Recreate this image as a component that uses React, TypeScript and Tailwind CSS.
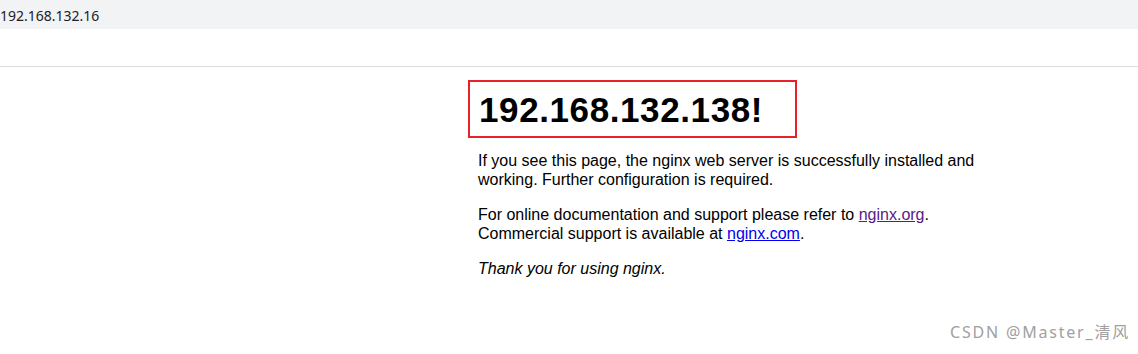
export default function App() {
  return (
    <div className="relative h-[354px] w-[1138px] overflow-hidden bg-white">
      <div className="flex h-[29px] items-center bg-[#f1f3f4] pt-[2px] font-['Noto_Sans',sans-serif] text-[14px] text-[#202124]">
        192.168.132.16
      </div>
      <div className="mt-[37px] h-px bg-[#dcdcdc]" />

      <div className="ml-[468px] mt-[13px] font-['Liberation_Sans',Arial,sans-serif] text-black">
        <div className="flex h-[58px] w-[329px] items-center border-2 border-[#e8202a] pl-[9px]">
          <h1 className="text-[35px] font-bold leading-none tracking-[0.6px]">192.168.132.138!</h1>
        </div>
        <div className="mt-[13px] pl-[10px] text-[16px] leading-[19px]">
          <p>
            If you see this page, the nginx web server is successfully installed and
            <br />
            working. Further configuration is required.
          </p>
          <p className="mt-[16px]">
            For online documentation and support please refer to{" "}
            <a href="#" className="text-[#551a8b] underline">nginx.org</a>.
            <br />
            Commercial support is available at{" "}
            <a href="#" className="text-[#0000ee] underline">nginx.com</a>.
          </p>
          <p className="mt-[16px] italic">Thank you for using nginx.</p>
        </div>
      </div>

      <div className="absolute bottom-[10px] right-[8px] font-['Noto_Sans','Noto_Sans_CJK_SC',sans-serif] text-[16px] tracking-[1.8px] text-[#a0a0a0]">
        CSDN @Master_清风
      </div>
    </div>
  );
}
